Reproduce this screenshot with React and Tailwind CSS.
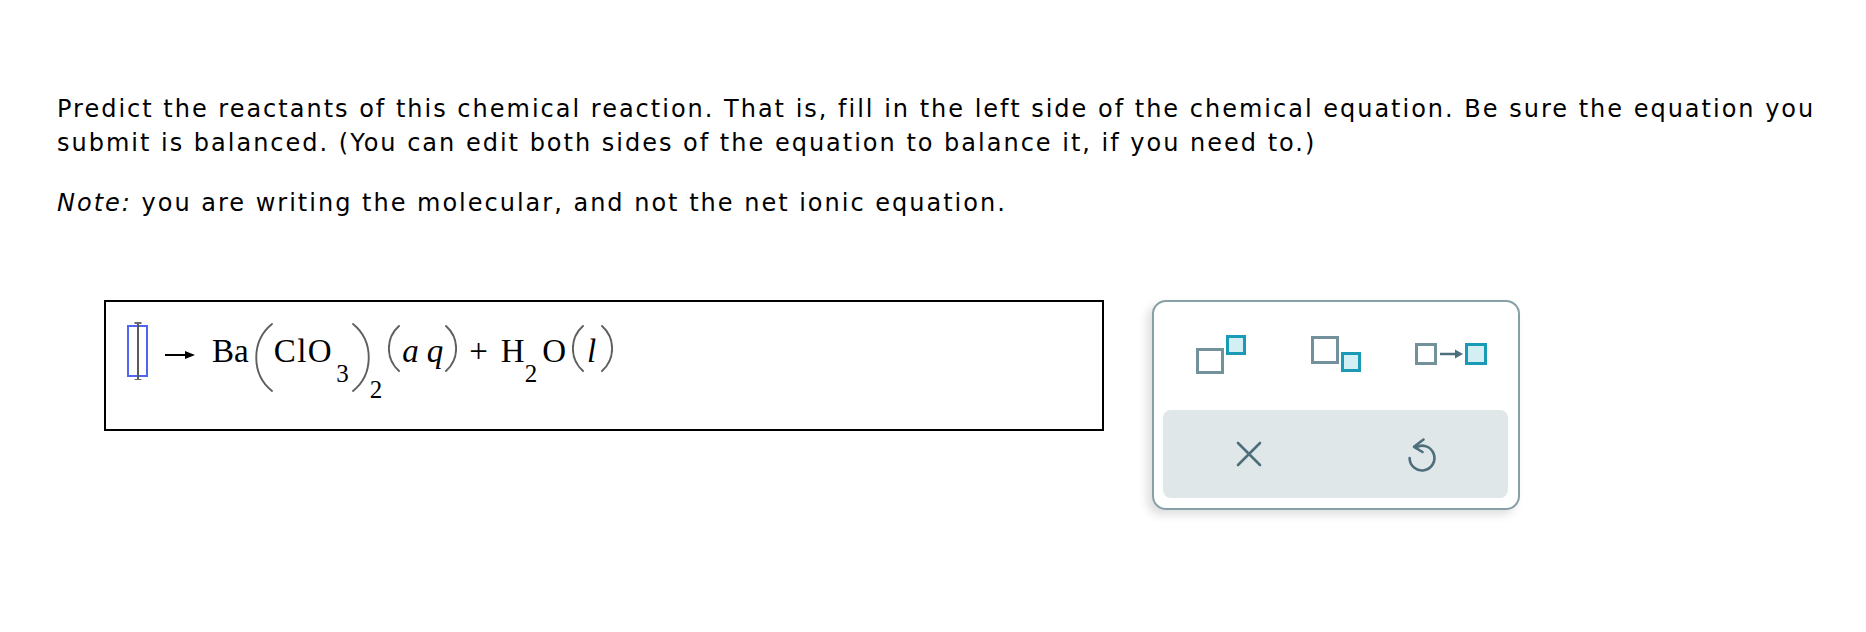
import React from 'react';

const serif = '[font-family:Liberation_Serif,Times_New_Roman,serif]';

function Paren({ side = 'left', big = false }) {
  // stretchy delimiter, drawn
  const w = big ? 18 : 12;
  const h = big ? 69 : 47;
  const d = big
    ? side === 'left'
      ? 'M17 1 C -4 18, -4 51, 17 68'
      : 'M1 1 C 22 18, 22 51, 1 68'
    : side === 'left'
      ? 'M11 1 C -2.5 13, -2.5 34, 11 46'
      : 'M1 1 C 14.5 13, 14.5 34, 1 46';
  return (
    <svg width={w} height={h} viewBox={`0 0 ${w} ${h}`} className="shrink-0">
      <path d={d} fill="none" stroke="#5f5f5f" strokeWidth="1.9" strokeLinecap="round" />
    </svg>
  );
}

function Equation() {
  return (
    <div className="w-[1000px] h-[131px] border-2 border-black bg-white">
      <div className={`flex items-start ${serif} text-black`}>
        {/* empty slot with cursor */}
        <div className="relative ml-[21px] mt-[23px] w-[21px] h-[52px] border-2 border-[#5066f3] shrink-0">
          <div className="absolute left-1/2 -translate-x-1/2 -top-[5px] -bottom-[5px] w-[2px] bg-[#5a5a5a]" />
          <div className="absolute left-1/2 -translate-x-1/2 -top-[5px] w-[7px] h-[1.5px] bg-[#6a6a6a]" />
          <div className="absolute left-1/2 -translate-x-1/2 -bottom-[5px] w-[7px] h-[1.5px] bg-[#6a6a6a]" />
        </div>
        <svg width="30" height="10" viewBox="0 0 30 10" className="ml-[17px] mt-[48px] shrink-0">
          <line x1="0" y1="5" x2="22" y2="5" stroke="#000" strokeWidth="2" />
          <polygon points="20,1 30,5 20,9" fill="#000" />
        </svg>
        <span className="ml-[17px] mt-[33px] text-[33px] leading-[33px]">Ba</span>
        <span className="ml-[6px] mt-[21px] flex"><Paren big /></span>
        <span className="ml-[1px] mt-[33px] text-[33px] leading-[33px] tracking-[1.5px]">ClO</span>
        <span className="ml-[3px] mt-[59px] text-[25px] leading-[25px]">3</span>
        <span className="ml-[3px] mt-[21px] flex"><Paren big side="right" /></span>
        <span className="mt-[75px] text-[25px] leading-[25px]">2</span>
        <span className="ml-[6px] mt-[23px] flex"><Paren /></span>
        <span className="ml-[2px] mt-[33px] text-[33px] leading-[33px] italic">a</span>
        <span className="ml-[8px] mt-[33px] text-[33px] leading-[33px] italic">q</span>
        <span className="ml-[2px] mt-[23px] flex"><Paren side="right" /></span>
        <span className="ml-[12px] mt-[33px] text-[33px] leading-[33px]">+</span>
        <span className="ml-[13px] mt-[33px] text-[33px] leading-[33px]">H</span>
        <span className="mt-[59px] text-[25px] leading-[25px]">2</span>
        <span className="ml-[5px] mt-[33px] text-[33px] leading-[33px]">O</span>
        <span className="ml-[6px] mt-[23px] flex"><Paren /></span>
        <span className="ml-[3px] mt-[33px] text-[33px] leading-[33px] italic">l</span>
        <span className="ml-[5px] mt-[23px] flex"><Paren side="right" /></span>
      </div>
    </div>
  );
}

const GRAY = '#72919b';
const TEAL = '#1b9ab6';
const FILL = '#d3eff3';
const DARK = '#4d6e7b';

function SuperIcon() {
  return (
    <svg width="50" height="39" viewBox="0 0 50 39">
      <rect x="1.5" y="14.5" width="25" height="23" fill="#fff" stroke={GRAY} strokeWidth="3" />
      <rect x="31.5" y="1.5" width="17" height="17" fill={FILL} stroke={TEAL} strokeWidth="3" />
    </svg>
  );
}

function SubIcon() {
  return (
    <svg width="50" height="36" viewBox="0 0 50 36">
      <rect x="1.5" y="1.5" width="25" height="25" fill="#fff" stroke={GRAY} strokeWidth="3" />
      <rect x="31.5" y="17.5" width="17" height="17" fill={FILL} stroke={TEAL} strokeWidth="3" />
    </svg>
  );
}

function ArrowIcon() {
  return (
    <svg width="72" height="22" viewBox="0 0 72 22">
      <rect x="1.5" y="1.5" width="19" height="19" fill="#fff" stroke={GRAY} strokeWidth="3" />
      <line x1="25" y1="11" x2="42" y2="11" stroke={DARK} strokeWidth="2.5" />
      <polygon points="40,6.5 48,11 40,15.5" fill={DARK} />
      <rect x="51.5" y="1.5" width="19" height="19" fill={FILL} stroke={TEAL} strokeWidth="3" />
    </svg>
  );
}

function Palette() {
  return (
    <div className="w-[368px] h-[210px] rounded-[14px] border-2 border-[#86a0a8] bg-white shadow-[-5px_5px_10px_rgba(0,0,0,0.13)] pt-[9px] pl-[9px] pr-[10px] pb-[10px] flex flex-col">
      <div className="h-[99px] pb-[13px] grid grid-cols-3 items-center justify-items-center">
        <button className="flex items-center justify-center"><SuperIcon /></button>
        <button className="flex items-center justify-center"><SubIcon /></button>
        <button className="flex items-center justify-center"><ArrowIcon /></button>
      </div>
      <div className="h-[88px] rounded-lg bg-[#e0e7e9] grid grid-cols-2 items-center justify-items-center">
        <button className="flex items-center justify-center">
          <svg width="26" height="26" viewBox="0 0 26 26">
            <path d="M2 2 L24 24 M24 2 L2 24" stroke={DARK} strokeWidth="2.6" strokeLinecap="round" />
          </svg>
        </button>
        <button className="flex items-center justify-center mt-[2px]">
          <svg width="28" height="36" viewBox="0 0 28 36">
            <path d="M1.6 21 A12.4 12.4 0 1 0 7.8 10.3" fill="none" stroke={DARK} strokeWidth="2.6" strokeLinecap="round" />
            <path d="M15.5 2.5 L6 9.8 L14.5 15" fill="none" stroke={DARK} strokeWidth="2.6" strokeLinecap="round" strokeLinejoin="round" />
          </svg>
        </button>
      </div>
    </div>
  );
}

export default function App() {
  return (
    <div className="w-[1866px] h-[632px] bg-white pl-[57px] pt-[92px] [font-family:DejaVu_Sans,Verdana,sans-serif] text-black">
      <p className="text-[24px] leading-[34px] tracking-[2px] whitespace-nowrap">
        Predict the reactants of this chemical reaction. That is, fill in the left side of the chemical equation. Be sure the equation you
        <br />
        submit is balanced. (You can edit both sides of the equation to balance it, if you need to.)
      </p>
      <p className="mt-[26px] text-[24px] leading-[34px] tracking-[2px] whitespace-nowrap">
        <i>Note:</i> you are writing the molecular, and not the net ionic equation.
      </p>
      <div className="mt-[80px] ml-[47px] flex items-start gap-[48px]">
        <Equation />
        <Palette />
      </div>
    </div>
  );
}
